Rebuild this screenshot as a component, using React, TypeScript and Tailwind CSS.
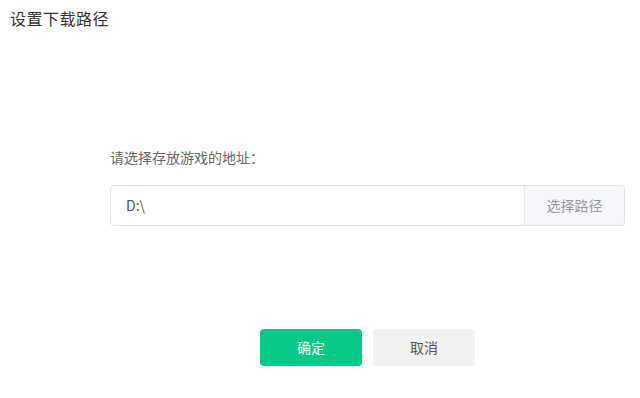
import React from 'react'

export default function App() {
  const [path] = React.useState('D:\\')

  return (
    <div
      className="w-[640px] h-[398px] bg-white relative"
      style={{ fontFamily: '"Noto Sans CJK SC", "Noto Sans", sans-serif' }}
    >
      {/* Title */}
      <div className="pl-[10px] pt-[6px] text-[16px] tracking-[0.5px] leading-[24px] text-[#333]">设置下载路径</div>

      {/* Path form */}
      <div className="pl-[110px] pr-[15px] pt-[117px]">
        <div className="text-[14px] leading-[20px] text-[#666]">请选择存放游戏的地址：</div>
        <div className="mt-[18px] flex h-[41px] border border-[#e0e2e6] rounded-[4px] overflow-hidden">
          <div className="flex-1 flex items-center pl-[15px] text-[14px] text-[#555]">{path}</div>
          <div className="w-[100px] flex items-center justify-center bg-[#f5f7fa] border-l border-[#e4e7ed] text-[14px] text-[#999]">
            选择路径
          </div>
        </div>
      </div>

      {/* Actions */}
      <div className="flex gap-[11px] pl-[260px] pt-[103px]">
        <button className="w-[102px] h-[37px] rounded-[4px] bg-[#07c986] text-white text-[14px]">确定</button>
        <button className="w-[102px] h-[37px] rounded-[4px] bg-[#f0f1f3] text-[#555] text-[14px]">取消</button>
      </div>
    </div>
  )
}
